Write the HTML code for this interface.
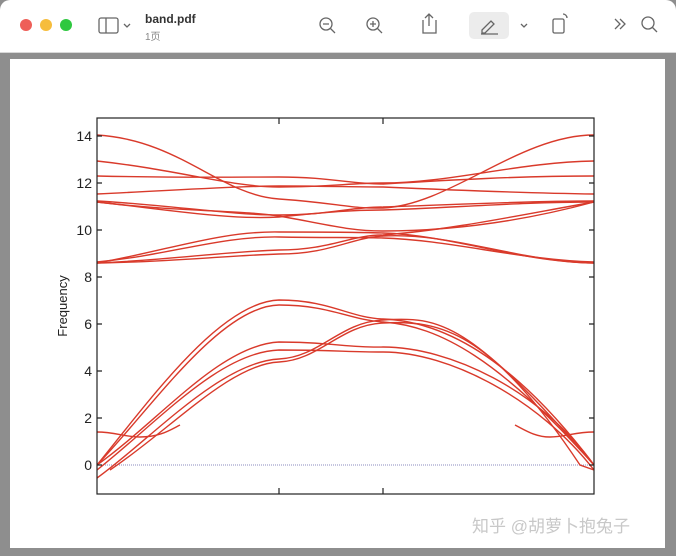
<!DOCTYPE html>
<html><head><meta charset="utf-8"><style>
body{margin:0;width:676px;height:556px;overflow:hidden;background:#8e8e8e;font-family:"Liberation Sans","Noto Sans CJK SC",sans-serif;position:relative}
.bar{position:absolute;left:0;top:0;width:676px;height:52px;background:#fff;border-radius:10px 10px 0 0;border-bottom:1px solid #d8d8d8}
.dot{position:absolute;top:19px;width:12px;height:12px;border-radius:50%}
.page{position:absolute;left:10px;top:59px;width:655px;height:489px;background:#fff}
</style></head><body>
<div class="bar">
<div class="dot" style="left:20px;background:#ee5f58"></div>
<div class="dot" style="left:40px;background:#f6bd3c"></div>
<div class="dot" style="left:60px;background:#2fc840"></div>
<svg style="position:absolute;left:0;top:0" width="676" height="52" fill="none" stroke="#666" stroke-width="1.3">
<rect x="99" y="18" width="19" height="15" rx="2"/><line x1="106" y1="18" x2="106" y2="33"/>
<path d="M124 24l3 3 3-3"/>
<circle cx="326" cy="24" r="6"/><path d="M330 28l5 5M323 24h6"/>
<circle cx="373" cy="24" r="6"/><path d="M377 28l5 5M370 24h6M373 21v6"/>
<path d="M423 20v13h13V20M429 14v12M425 18l4-4 4 4"/>
<rect x="469" y="12" width="40" height="27" rx="5" fill="#ececec" stroke="none"/>
<path d="M482 30l9-9 3 3-9 9h-3zM481 34h17"/>
<path d="M521 24l3 3 3-3"/>
<rect x="553" y="19" width="11" height="14" rx="1.5"/><path d="M563 14a4 4 0 0 1 4 4"/>
<path d="M615 19l5 5-5 5M620 19l5 5-5 5"/>
<circle cx="648" cy="23" r="6"/><path d="M652 27l5 5"/>
</svg>
<div style="position:absolute;left:145px;top:12px;font-size:12px;font-weight:bold;color:#333">band.pdf</div>
<div style="position:absolute;left:145px;top:28px;font-size:10px;color:#888">1页</div>
</div>
<div class="page"></div>
<svg style="position:absolute;left:0;top:0" width="676" height="556">
<g font-family="Liberation Sans, sans-serif" font-size="14" fill="#222" text-anchor="end">
<text x="92" y="141">14</text><text x="92" y="188">12</text><text x="92" y="235">10</text>
<text x="92" y="282">8</text><text x="92" y="329">6</text><text x="92" y="376">4</text>
<text x="92" y="423">2</text><text x="92" y="470">0</text>
</g>
<text transform="translate(67,306) rotate(-90)" font-family="Liberation Sans, sans-serif" font-size="13" fill="#222" text-anchor="middle">Frequency</text>
<line x1="97" y1="465" x2="594" y2="465" stroke="#66a" stroke-width="0.8" stroke-dasharray="1 1"/>
<g fill="none" stroke="#d93a2b" stroke-width="1.4">
<path d="M97,135 C180,140 220,195 279,199 S350,209 383,208 C450,205 520,135 594,135"/>
<path d="M97,161 C180,170 230,187 279,187 C330,187 350,183 383,183 C450,183 520,162 594,161"/>
<path d="M97,176 C180,178 240,177 279,177 C330,177 350,184 383,184 C450,180 520,176 594,176"/>
<path d="M97,194 C180,190 240,186 279,186 C330,186 350,187 383,187 C450,190 520,193 594,194"/>
<path d="M97,201 C170,205 230,215 279,215 C330,215 350,207 383,207 C450,205 520,201 594,201"/>
<path d="M97,202 C170,210 230,220 279,217 C330,212 350,210 383,210 C450,208 520,202 594,202"/>
<path d="M97,202 C180,212 240,210 279,216 C330,225 350,231 383,231 C450,231 520,222 594,202"/>
<path d="M97,263 C170,250 220,231 279,232 C330,232 350,232 383,233 C450,235 520,262 594,263"/>
<path d="M97,262 C170,255 220,236 279,237 C330,238 350,237 383,238 C450,240 520,260 594,262"/>
<path d="M97,263 C170,260 220,252 279,250 C330,250 350,235 383,235 C450,230 520,215 594,202"/>
<path d="M97,263 C170,262 220,256 279,254 C330,254 350,238 383,236 C450,232 520,262 594,263"/>
<path d="M97,465 C150,400 220,302 279,300 C330,300 350,318 383,319 C460,322 530,380 594,465"/>
<path d="M97,465 C150,410 220,306 279,305 C330,305 350,320 383,322 C440,326 500,360 594,465"/>
<path d="M97,465 C160,420 220,345 279,342 C330,342 350,348 383,347 C450,347 540,390 594,465"/>
<path d="M97,470 C160,420 220,352 279,350 C330,350 350,352 383,352 C450,352 540,400 594,470"/>
<path d="M97,478 C150,440 220,362 279,359 C320,357 340,322 383,320 C440,316 470,322 594,465"/>
<path d="M110,470 C170,430 230,364 279,362 C320,360 340,325 383,323 C440,320 490,330 580,465 L594,470"/>
<path d="M97,432 C115,432 125,437 140,437 C160,437 170,430 180,425"/>
<path d="M594,432 C575,432 565,437 550,437 C535,437 525,430 515,425"/>
</g>
<g fill="none" stroke="#222" stroke-width="1.2">
<rect x="97" y="118" width="497" height="376"/>
<path d="M279,118v6M383,118v6M279,494v-6M383,494v-6"/>
<path d="M97,136h5M97,183h5M97,230h5M97,277h5M97,324h5M97,371h5M97,418h5M97,465h5"/>
<path d="M594,136h-5M594,183h-5M594,230h-5M594,277h-5M594,324h-5M594,371h-5M594,418h-5M594,465h-5"/>
</g>
<text x="472" y="532" font-family="Liberation Sans, Noto Sans CJK SC, sans-serif" font-size="17" fill="#c8c8c8">知乎 @胡萝卜抱兔子</text>
</svg>
</body></html>
